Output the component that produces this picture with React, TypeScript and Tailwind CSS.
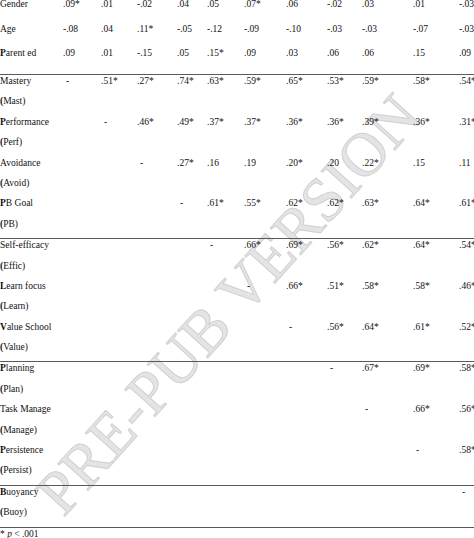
import React from "react";

const grid =
  "grid grid-cols-[63px_38px_36px_40px_30px_37px_42px_41px_35px_51px_46px_15px]";

type Cell = string | null;

const demo: { label: string; bold?: boolean; vals: Cell[] }[] = [
  { label: "Gender", vals: [".09*", ".01", "-.02", ".04", ".05", ".07*", ".06", "-.02", ".03", ".01", "-.03"] },
  { label: "Age", vals: ["-.08", ".04", ".11*", "-.05", "-.12", "-.09", "-.10", "-.03", "-.03", "-.07", "-.03"] },
  { label: "Parent ed", bold: true, vals: [".09", ".01", "-.15", ".05", ".15*", ".09", ".03", ".06", ".06", ".15", ".09"] },
];

const e = null;

// blocks of measures, split by rules in the table
const blocks: { label: string; abbr: string; bold?: boolean; vals: Cell[] }[][] = [
  [
    { label: "Mastery", abbr: "Mast", vals: ["-", ".51*", ".27*", ".74*", ".63*", ".59*", ".65*", ".53*", ".59*", ".58*", ".54*"] },
    { label: "Performance", abbr: "Perf", bold: true, vals: [e, "-", ".46*", ".49*", ".37*", ".37*", ".36*", ".36*", ".39*", ".36*", ".31*"] },
    { label: "Avoidance", abbr: "Avoid", vals: [e, e, "-", ".27*", ".16", ".19", ".20*", ".20", ".22*", ".15", ".11"] },
    { label: "PB Goal", abbr: "PB", bold: true, vals: [e, e, e, "-", ".61*", ".55*", ".62*", ".62*", ".63*", ".64*", ".61*"] },
  ],
  [
    { label: "Self-efficacy", abbr: "Effic", vals: [e, e, e, e, "-", ".66*", ".69*", ".56*", ".62*", ".64*", ".54*"] },
    { label: "Learn focus", abbr: "Learn", bold: true, vals: [e, e, e, e, e, "-", ".66*", ".51*", ".58*", ".58*", ".46*"] },
    { label: "Value School", abbr: "Value", bold: true, vals: [e, e, e, e, e, e, "-", ".56*", ".64*", ".61*", ".52*"] },
  ],
  [
    { label: "Planning", abbr: "Plan", bold: true, vals: [e, e, e, e, e, e, e, "-", ".67*", ".69*", ".58*"] },
    { label: "Task Manage", abbr: "Manage", vals: [e, e, e, e, e, e, e, e, "-", ".66*", ".56*"] },
    { label: "Persistence", abbr: "Persist", bold: true, vals: [e, e, e, e, e, e, e, e, e, "-", ".58*"] },
  ],
  [
    { label: "Buoyancy", abbr: "Buoy", bold: true, vals: [e, e, e, e, e, e, e, e, e, e, "-"] },
  ],
];

function Label({ text, bold }: { text: string; bold?: boolean }) {
  if (!bold) return <span>{text}</span>;
  return (
    <span>
      <span className="font-bold">{text[0]}</span>
      {text.slice(1)}
    </span>
  );
}

function Vals({ vals }: { vals: Cell[] }) {
  return (
    <>
      {vals.map((v, i) => (
        <div key={i} className={v === "-" ? "pl-[3px]" : ""}>
          {v ?? ""}
        </div>
      ))}
      <div />
    </>
  );
}

export default function App() {
  return (
    <div
      className="relative w-[474px] h-[538px] overflow-hidden bg-white text-[#111] text-[9.5px] leading-[12px]"
      style={{ fontFamily: '"Liberation Serif", "Times New Roman", serif' }}
    >
      {/* watermark */}
      <div className="absolute left-[228px] top-[304px] z-0 pointer-events-none">
        <div
          className="-translate-x-1/2 -translate-y-1/2 rotate-[-48deg] whitespace-nowrap text-[62px] leading-none text-[#e4e4e4]"
          style={{ WebkitTextStroke: "1px #d0d0d0" }}
        >
          PRE-PUB VERSION
        </div>
      </div>

      <div className="relative z-10">
        <div className="mt-[-2px] h-[76px]">
          {demo.map((r) => (
            <div key={r.label} className={`${grid} h-[24.5px]`}>
              <div className="whitespace-nowrap">
                <Label text={r.label} bold={r.bold} />
              </div>
              <Vals vals={r.vals} />
            </div>
          ))}
        </div>

        {blocks.map((b, bi) => (
          <div key={bi} className="border-t border-[#5a5a5a]">
            {b.map((r) => (
              <React.Fragment key={r.label}>
                <div className={`${grid} h-[20.4px]`}>
                  <div className="whitespace-nowrap">
                    <Label text={r.label} bold={r.bold} />
                  </div>
                  <Vals vals={r.vals} />
                </div>
                <div className="h-[20.4px] whitespace-nowrap">
                  <span className="font-bold">(</span>
                  {r.abbr})
                </div>
              </React.Fragment>
            ))}
          </div>
        ))}

        <div className="border-t border-[#5a5a5a] whitespace-nowrap">
          * <span className="italic">p</span> &lt; .001
        </div>
      </div>
    </div>
  );
}
